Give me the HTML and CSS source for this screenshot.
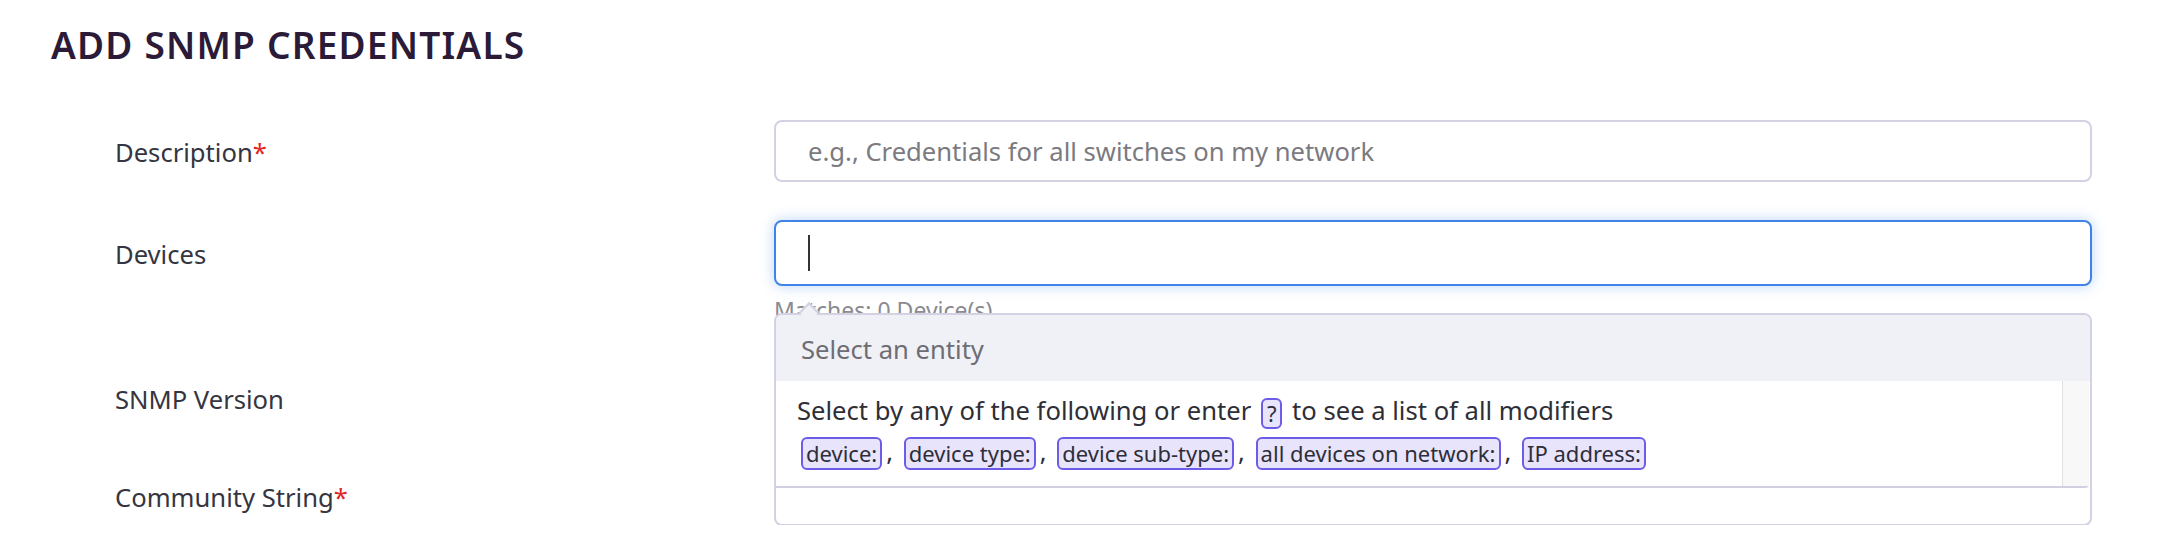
FILE: index.html
```html
<!DOCTYPE html>
<html lang="en">
<head>
<meta charset="utf-8">
<title>Add SNMP Credentials</title>
<link rel="stylesheet" href="styles.css">
</head>
<body>
<main class="page">
  <h1 class="title">ADD SNMP CREDENTIALS</h1>
  <form class="form">
    <div class="row">
      <div class="label h62">Description<span class="req">*</span></div>
      <div class="field">
        <div class="input h62"><span class="placeholder">e.g., Credentials for all switches on my network</span></div>
      </div>
    </div>
    <div class="row">
      <div class="label h66">Devices</div>
      <div class="field field-devices">
        <div class="input input-focus h66"><span class="caret"></span></div>
        <div class="matches">Matches: 0 Device(s)</div>
        <div class="dropdown">
          <span class="dropdown-arrow"></span>
          <div class="dropdown-header">Select an entity</div>
          <div class="dropdown-list">
            <div class="dropdown-body">
              <p class="hint">Select by any of the following or enter <span class="chip chip-q">?</span> to see a list of all modifiers</p>
              <p class="chips"><span class="chip">device:</span>, <span class="chip">device type:</span>, <span class="chip">device sub-type:</span>, <span class="chip">all devices on network:</span>, <span class="chip">IP address:</span></p>
            </div>
            <div class="scroll-track"></div>
          </div>
          <div class="dropdown-footer"></div>
        </div>
      </div>
    </div>
    <div class="row">
      <div class="label h62">SNMP Version</div>
      <div class="field">
        <div class="input h62"></div>
      </div>
    </div>
    <div class="row">
      <div class="label h58">Community String<span class="req">*</span></div>
      <div class="field">
        <div class="input h58"></div>
      </div>
    </div>
  </form>
</main>
</body>
</html>
```
FILE: styles.css
```css
* { box-sizing: border-box; }
html, body {
  margin: 0;
  background: #ffffff;
}
body {
  font-family: "Noto Sans", "Open Sans", sans-serif;
  font-size: 25.6px;
  color: #33333d;
}
.page {
  padding: 22px 84px 0 51px;
}
.title {
  margin: 0;
  font-size: 37px;
  line-height: 46px;
  font-weight: 600;
  letter-spacing: 1.2px;
  color: #2b1b38;
}
.form {
  margin: 52px 0 0 64px;
  display: flex;
  flex-direction: column;
  gap: 38px;
}
.row {
  display: grid;
  grid-template-columns: 659px 1318px;
  align-items: start;
}
.label {
  display: flex;
  align-items: center;
  padding-top: 2px;
  font-size: 25.6px;
  color: #35353f;
}
.req { color: #e5261f; }
.h62 { height: 62px; }
.h66 { height: 66px; }
.h58 { height: 58px; }
.field { position: relative; }
.input {
  display: flex;
  align-items: center;
  border: 2px solid #d4d2e2;
  border-radius: 8px;
  padding-left: 32px;
  background: #fff;
}
.placeholder { color: #7a7a80; }
.input-focus {
  border-color: #3f84e6;
  box-shadow: 0 0 14px rgba(63, 132, 230, 0.35);
}
.caret {
  width: 2px;
  height: 36px;
  background: #333;
}
.matches {
  margin: 8px 0 3px;
  font-size: 23px;
  line-height: 32px;
  color: #8a8a90;
}
.dropdown {
  position: absolute;
  top: 93px;
  left: 0;
  right: 0;
  z-index: 5;
  background: #fff;
  border: 2px solid #d4d2e2;
  border-radius: 8px;
}
.dropdown-arrow {
  position: absolute;
  left: 26px;
  top: -10px;
  width: 14px;
  height: 14px;
  background: #f0f1f6;
  border-top: 2px solid #d4d2e2;
  border-left: 2px solid #d4d2e2;
  transform: rotate(45deg);
}
.dropdown-header {
  height: 66px;
  display: flex;
  align-items: center;
  padding: 2px 0 0 25px;
  background: #f0f1f6;
  color: #6d6d73;
  border-radius: 6px 6px 0 0;
}
.dropdown-list {
  display: flex;
  height: 107px;
  border-bottom: 2px solid #d2d0e0;
  border-bottom-right-radius: 4px;
  margin-right: 1px;
}
.dropdown-body {
  flex: 1;
  padding: 13px 0 0 21px;
  color: #2e2e36;
}
.hint {
  margin: 0;
  line-height: 34px;
}
.chips {
  margin: 4px 0 0;
  line-height: 37px;
}
.chip {
  display: inline-block;
  vertical-align: middle;
  margin: 0 4px;
  padding: 0 3px;
  border: 2px solid #6c5ce7;
  border-radius: 6px;
  background: #e7e4fb;
  font-size: 22px;
  line-height: 29px;
  color: #2e2e3a;
}
.chip-q {
  margin: 0 3px;
  padding: 0 4px;
  line-height: 27px;
}
.scroll-track {
  width: 27px;
  background: #f8f8f8;
  border-left: 1px solid #e2e2e2;
}
.dropdown-footer {
  height: 36px;
}
```
